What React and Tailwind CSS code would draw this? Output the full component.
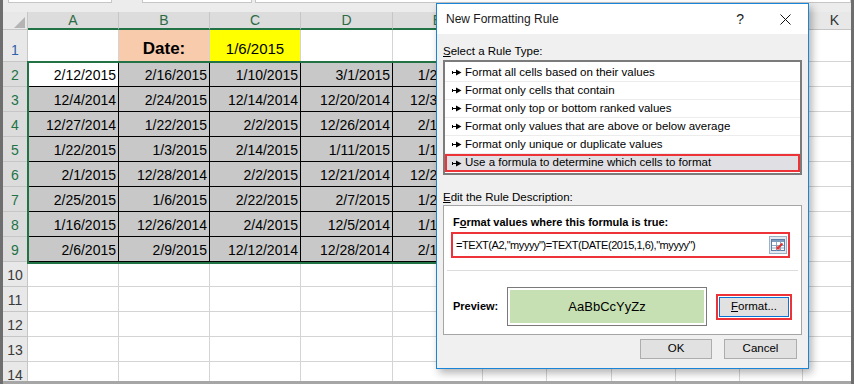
import React from 'react'

const COLS = ['A', 'B', 'C', 'D', 'E', 'F', 'G', 'H', 'I', 'J', 'K']

const DATA = [
  ['2/12/2015', '2/16/2015', '1/10/2015', '3/1/2015', '1/25/2015'],
  ['12/4/2014', '2/24/2015', '12/14/2014', '12/20/2014', '12/31/2014'],
  ['12/27/2014', '1/22/2015', '2/2/2015', '12/26/2014', '2/10/2015'],
  ['1/22/2015', '1/3/2015', '2/14/2015', '1/11/2015', '1/18/2015'],
  ['2/1/2015', '12/28/2014', '2/2/2015', '12/21/2014', '12/24/2014'],
  ['2/25/2015', '1/6/2015', '2/22/2015', '2/7/2015', '1/20/2015'],
  ['1/16/2015', '12/26/2014', '2/4/2015', '12/5/2014', '1/19/2015'],
  ['2/6/2015', '2/9/2015', '12/12/2014', '12/28/2014', '2/13/2015'],
]

const RULES = [
  'Format all cells based on their values',
  'Format only cells that contain',
  'Format only top or bottom ranked values',
  'Format only values that are above or below average',
  'Format only unique or duplicate values',
  'Use a formula to determine which cells to format',
]

function RowHead({ n, selected }) {
  const color = n === 1 ? 'text-[#2f62a8]' : selected ? 'text-[#217346]' : 'text-[#3a3a3a]'
  return (
    <div
      className={`flex items-end justify-center pb-[3px] leading-[16px] border-b border-r border-[#c6c6c6] text-[14px] ${
        selected ? 'bg-[#dcdcdc]' : 'bg-[#e8e8e8]'
      } ${color}`}
    >
      {n}
    </div>
  )
}

function GridRow({ n }) {
  return (
    <>
      <RowHead n={n} />
      {COLS.map((c) => (
        <div key={c} className="border-b border-r border-[#d4d4d4] bg-white" />
      ))}
    </>
  )
}

function DataRow({ n, vals }) {
  return (
    <>
      <RowHead n={n} selected />
      {vals.map((v, i) => (
        <div
          key={i}
          className={`flex items-end justify-end pr-[2px] pb-[3px] leading-[16px] border-b border-r border-black text-[14px] text-black ${
            n === 2 && i === 0 ? 'bg-white' : 'bg-[#c8c8c8]'
          }`}
        >
          {v}
        </div>
      ))}
      {COLS.slice(5).map((c) => (
        <div key={c} className="border-b border-r border-[#d4d4d4] bg-white" />
      ))}
    </>
  )
}

function Sheet() {
  return (
    <div className="flex-1 flex flex-col min-w-0 overflow-hidden">
      <div className="h-[12px] flex bg-[#ececec] shrink-0">
        <div className="ml-[5px] w-[105px] h-[3px] bg-white border-x border-b border-[#c6c6c6]" />
        <div className="ml-[30px] w-[110px] h-[3px] bg-white border-x border-b border-[#c6c6c6]" />
        <div className="ml-[3px] w-[600px] h-[3px] bg-white border-x border-b border-[#c6c6c6]" />
      </div>
      <div className="relative flex-1 overflow-hidden">
        <div className="grid grid-cols-[25px_91px_91px_91px_92px_90px_64px_65px_64px_64px_63px_64px] grid-rows-[18px_32px_repeat(13,25px)] font-['Liberation_Sans',Arial,sans-serif]">
          <div className="bg-[#e8e8e8] border-r border-b border-[#c6c6c6]">
            <svg width="25" height="18" viewBox="0 0 25 18">
              <polygon points="22,5 22,16 11,16" fill="#b4b4b4" />
            </svg>
          </div>
          {COLS.map((c, i) => (
            <div
              key={c}
              className={
                i < 5
                  ? 'flex items-center justify-center text-[14px] text-[#2c6b45] bg-[#dcdcdc] border-r border-[#c6c6c6] border-b-2 border-b-[#217346]'
                  : 'flex items-center justify-center text-[14px] text-[#333] bg-[#e8e8e8] border-r border-b border-[#c6c6c6]'
              }
            >
              {c}
            </div>
          ))}

          <RowHead n={1} />
          <div className="border-r border-b border-[#d4d4d4] bg-white" />
          <div className="flex items-end justify-center pb-[2px] leading-[20px] border-r border-b border-[#d4d4d4] bg-[#f8cbad] text-[17px] font-bold text-black">
            Date:
          </div>
          <div className="flex items-end justify-center pb-[3px] leading-[18px] border-r border-b border-[#d4d4d4] bg-[#ffff00] text-[15px] text-black">
            1/6/2015
          </div>
          {COLS.slice(3).map((c) => (
            <div key={c} className="border-b border-r border-[#d4d4d4] bg-white" />
          ))}

          {DATA.map((vals, i) => (
            <DataRow key={i} n={i + 2} vals={vals} />
          ))}
          {[10, 11, 12, 13, 14].map((n) => (
            <GridRow key={n} n={n} />
          ))}
        </div>
        <div className="absolute left-[24px] top-[49px] w-[457px] h-[203px] border-2 border-[#217346] pointer-events-none" />
      </div>
      <div className="h-[3px] bg-[#a6a6a6] shrink-0" />
    </div>
  )
}

function RuleArrow() {
  return (
    <svg width="10" height="7" viewBox="0 0 10 7" className="shrink-0">
      <rect x="0" y="2" width="1" height="3" fill="#000" />
      <rect x="1" y="3" width="3" height="1" fill="#000" />
      <polygon points="4,0.5 9.5,3.5 4,6.5" fill="#000" />
    </svg>
  )
}

function CollapseIcon() {
  return (
    <svg width="18" height="18" viewBox="0 0 18 18">
      <rect x="0.5" y="0.5" width="17" height="17" fill="#e3e9f0" stroke="#9fb0c3" />
      <rect x="2.5" y="3.5" width="13" height="11" fill="#ffffff" stroke="#5d7fa6" />
      <rect x="3" y="4" width="12" height="2" fill="#7d9cc0" />
      <path d="M3 9.5h12M3 12h12M7.5 6v8.5M11.5 6v8.5" stroke="#8ea7c4" strokeWidth="1" />
      <path d="M13.5 7.5 L9 12" stroke="#e03030" strokeWidth="2" />
      <polygon points="7.5,9.5 7.5,13.5 11.5,13.5" fill="#e03030" />
    </svg>
  )
}

function Dialog() {
  return (
    <div className="absolute left-[436px] top-[3px] w-[373px] h-[366px] flex flex-col border border-[#1a85d6] bg-[#f0f0f0] shadow-[3px_4px_8px_rgba(0,0,0,0.3)] font-['Liberation_Sans',Arial,sans-serif] text-black">
      <div className="h-[30px] shrink-0 flex items-center bg-white pl-[9px] text-[12px] text-[#1a1a1a]">
        <span className="flex-1">New Formatting Rule</span>
        <span className="text-[14px] mr-[36px]">?</span>
        <svg width="11" height="11" viewBox="0 0 11 11" className="mr-[17px]">
          <path d="M0.5 0.5L10.5 10.5M10.5 0.5L0.5 10.5" stroke="#111" strokeWidth="1" />
        </svg>
      </div>

      <div className="flex-1 flex flex-col px-[6px] pt-[9px] text-[11.5px]">
        <div className="leading-[16px]">
          <span className="underline">S</span>elect a Rule Type:
        </div>
        <div className="mt-[1px] h-[115px] border-2 border-[#7b7b7b] bg-white pt-[2px] pb-[1px]">
          {RULES.map((r, i) =>
            i === RULES.length - 1 ? (
              <div
                key={r}
                className="h-[18px] flex items-center gap-[3px] pl-[5px] border-2 border-[#ee3338] bg-[#e0e0e4]"
              >
                <RuleArrow />
                <span>{r}</span>
              </div>
            ) : (
              <div key={r} className="h-[18px] flex items-center gap-[3px] pl-[7px] border-b border-[#ececec]">
                <RuleArrow />
                <span>{r}</span>
              </div>
            )
          )}
        </div>

        <div className="mt-[14px] leading-[16px]">
          <span className="underline">E</span>dit the Rule Description:
        </div>
        <div className="h-[130px] border border-[#a5a5a5] bg-white flex flex-col pt-[8px]">
          <div className="pl-[9px] leading-[16px] font-bold text-[11px]">
            F<span className="underline">o</span>rmat values where this formula is true:
          </div>
          <div className="mt-[2px] ml-[7px] w-[339px] h-[26px] border-2 border-[#ee3338] flex items-center pl-[3px] pr-[1px]">
            <span className="flex-1 text-[11px] tracking-[-0.45px]">
              =TEXT(A2,"myyyy")=TEXT(DATE(2015,1,6),"myyyy")
            </span>
            <CollapseIcon />
          </div>
          <div className="mt-[12px] mx-[3px] h-px bg-[#dcdcdc]" />
          <div className="mt-[16px] flex items-center pl-[9px]">
            <span className="w-[54px] font-bold text-[11px]">Preview:</span>
            <div className="w-[200px] h-[39px] border border-[#7a7a7a] p-[2px] bg-white">
              <div className="h-full bg-[#c6e0b4] flex items-center justify-center text-[13px]">AaBbCcYyZz</div>
            </div>
            <div className="ml-[9px] w-[76px] h-[26px] border-2 border-[#ee3338] p-px">
              <div className="h-full border border-[#0a74d4] bg-[#e1e1e1] flex items-center justify-center">
                <span>
                  <span className="underline">F</span>ormat...
                </span>
              </div>
            </div>
          </div>
        </div>

        <div className="mt-[4px] flex justify-end gap-[12px] pr-[5px]">
          <div className="w-[72px] h-[20px] border border-[#adadad] bg-[#e1e1e1] flex items-center justify-center">OK</div>
          <div className="w-[73px] h-[20px] border border-[#adadad] bg-[#e1e1e1] flex items-center justify-center">Cancel</div>
        </div>
      </div>
    </div>
  )
}

export default function App() {
  return (
    <div className="relative w-[854px] h-[384px] overflow-hidden flex bg-white">
      <div className="w-[3px] bg-[#6e6e6e] shrink-0" />
      <Sheet />
      <div className="w-[3px] bg-[#6e6e6e] shrink-0" />
      <Dialog />
    </div>
  )
}
